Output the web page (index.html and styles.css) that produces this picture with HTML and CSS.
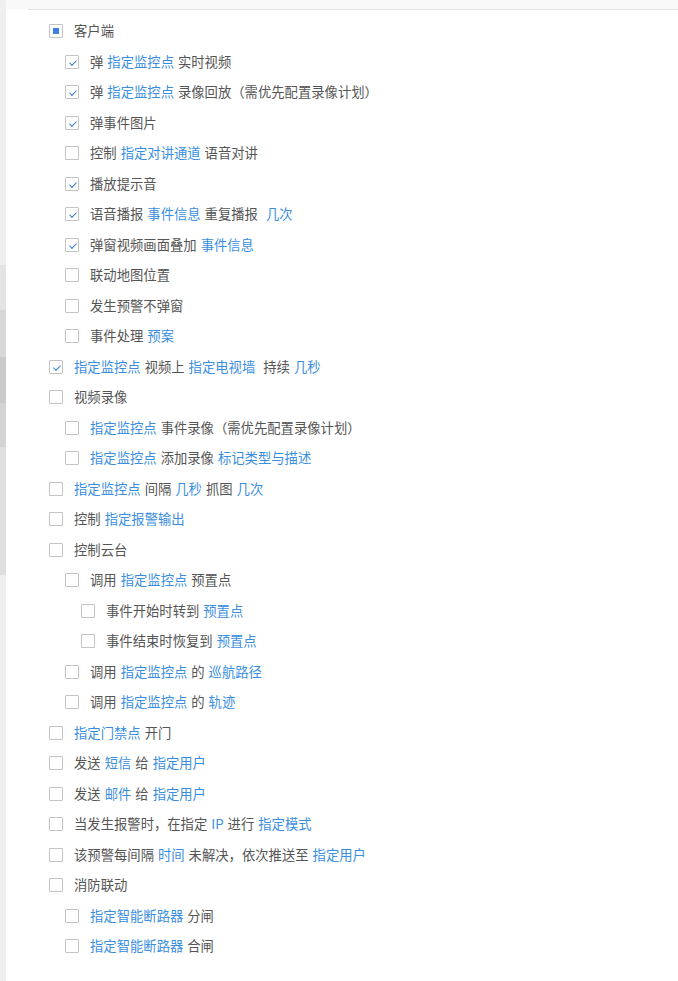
FILE: index.html
```html
<!DOCTYPE html>
<html lang="zh-CN">
<head>
<meta charset="utf-8">
<title>联动配置</title>
<link rel="stylesheet" href="styles.css">
</head>
<body>
<div class="page">
  <aside class="edge">
    <div class="seg s1"></div>
    <div class="seg s2"></div>
    <div class="seg s3"></div>
    <div class="seg s4"></div>
    <div class="seg s5"></div>
    <div class="seg s6"></div>
    <div class="seg s7"></div>
  </aside>
  <main class="main">
    <div class="topband"></div>
    <ul class="list">
      <li class="row l0"><span class="cb ind"></span><span class="txt">客户端</span></li>
      <li class="row l1"><span class="cb on"></span><span class="txt">弹 <a>指定监控点</a> 实时视频</span></li>
      <li class="row l1"><span class="cb on"></span><span class="txt">弹 <a>指定监控点</a> 录像回放（需优先配置录像计划）</span></li>
      <li class="row l1"><span class="cb on"></span><span class="txt">弹事件图片</span></li>
      <li class="row l1"><span class="cb"></span><span class="txt">控制 <a>指定对讲通道</a> 语音对讲</span></li>
      <li class="row l1"><span class="cb on"></span><span class="txt">播放提示音</span></li>
      <li class="row l1"><span class="cb on"></span><span class="txt">语音播报 <a>事件信息</a> 重复播报  <a>几次</a></span></li>
      <li class="row l1"><span class="cb on"></span><span class="txt">弹窗视频画面叠加 <a>事件信息</a></span></li>
      <li class="row l1"><span class="cb"></span><span class="txt">联动地图位置</span></li>
      <li class="row l1"><span class="cb"></span><span class="txt">发生预警不弹窗</span></li>
      <li class="row l1"><span class="cb"></span><span class="txt">事件处理 <a>预案</a></span></li>
      <li class="row l0"><span class="cb on"></span><span class="txt"><a>指定监控点</a> 视频上 <a>指定电视墙</a>  持续 <a>几秒</a></span></li>
      <li class="row l0"><span class="cb"></span><span class="txt">视频录像</span></li>
      <li class="row l1"><span class="cb"></span><span class="txt"><a>指定监控点</a> 事件录像（需优先配置录像计划）</span></li>
      <li class="row l1"><span class="cb"></span><span class="txt"><a>指定监控点</a> 添加录像 <a>标记类型与描述</a></span></li>
      <li class="row l0"><span class="cb"></span><span class="txt"><a>指定监控点</a> 间隔 <a>几秒</a> 抓图 <a>几次</a></span></li>
      <li class="row l0"><span class="cb"></span><span class="txt">控制 <a>指定报警输出</a></span></li>
      <li class="row l0"><span class="cb"></span><span class="txt">控制云台</span></li>
      <li class="row l1"><span class="cb"></span><span class="txt">调用 <a>指定监控点</a> 预置点</span></li>
      <li class="row l2"><span class="cb"></span><span class="txt">事件开始时转到 <a>预置点</a></span></li>
      <li class="row l2"><span class="cb"></span><span class="txt">事件结束时恢复到 <a>预置点</a></span></li>
      <li class="row l1"><span class="cb"></span><span class="txt">调用 <a>指定监控点</a> 的 <a>巡航路径</a></span></li>
      <li class="row l1"><span class="cb"></span><span class="txt">调用 <a>指定监控点</a> 的 <a>轨迹</a></span></li>
      <li class="row l0"><span class="cb"></span><span class="txt"><a>指定门禁点</a> 开门</span></li>
      <li class="row l0"><span class="cb"></span><span class="txt">发送 <a>短信</a> 给 <a>指定用户</a></span></li>
      <li class="row l0"><span class="cb"></span><span class="txt">发送 <a>邮件</a> 给 <a>指定用户</a></span></li>
      <li class="row l0"><span class="cb"></span><span class="txt">当发生报警时，在指定 <a>IP</a> 进行 <a>指定模式</a></span></li>
      <li class="row l0"><span class="cb"></span><span class="txt">该预警每间隔 <a>时间</a> 未解决，依次推送至 <a>指定用户</a></span></li>
      <li class="row l0"><span class="cb"></span><span class="txt">消防联动</span></li>
      <li class="row l1"><span class="cb"></span><span class="txt"><a>指定智能断路器</a> 分闸</span></li>
      <li class="row l1"><span class="cb"></span><span class="txt"><a>指定智能断路器</a> 合闸</span></li>
    </ul>
  </main>
</div>
</body>
</html>
```
FILE: styles.css
```css
html, body {
  margin: 0;
  padding: 0;
  background: #ffffff;
}

body {
  font-family: "Noto Sans CJK SC", "Noto Sans", sans-serif;
  font-size: 13.33px;
  color: #555555;
}

.page {
  display: flex;
  width: 678px;
  height: 981px;
  overflow: hidden;
}

.edge {
  width: 6px;
  flex: 0 0 6px;
  display: flex;
  flex-direction: column;
}

.seg { flex: 0 0 auto; }
.s1 { height: 265px; background: #efefef; }
.s2 { height: 45px; background: #e4e4e4; }
.s3 { height: 47px; background: #d8d8d8; }
.s4 { height: 46px; background: #cbcbcb; }
.s5 { height: 44px; background: #d4d4d4; }
.s6 { height: 128px; background: #dfdfdf; }
.s7 { flex: 1 1 auto; background: #efefef; }

.main {
  flex: 1 1 auto;
  display: flex;
  flex-direction: column;
}

.topband {
  height: 9px;
  background: #f9f9f9;
}

.list {
  list-style: none;
  margin: 0 0 0 22px;
  padding: 6px 0 0 0;
  border-top: 1px solid #e6e6e6;
}

.row {
  height: 30.5px;
  display: flex;
  align-items: center;
  white-space: pre;
  line-height: 18px;
}

.l0 { padding-left: 21px; }
.l1 { padding-left: 37px; }
.l2 { padding-left: 53px; }

.txt {
  word-spacing: 1px;
  text-spacing-trim: space-all;
}

.cb {
  box-sizing: border-box;
  width: 14px;
  height: 14px;
  flex: 0 0 14px;
  border: 1px solid #c4c4c4;
  border-radius: 1px;
  background: #ffffff;
  position: relative;
  margin-right: 11px;
}

.cb.on::after {
  content: "";
  position: absolute;
  left: 3px;
  top: 2px;
  width: 6px;
  height: 3px;
  border-left: 1.3px solid #3b7fd6;
  border-bottom: 1.3px solid #3b7fd6;
  transform: translate(0.5px, 2px) rotate(-45deg);
  transform-origin: center;
}

.cb.ind::after {
  content: "";
  position: absolute;
  left: 3px;
  top: 3px;
  width: 6px;
  height: 6px;
  background: #3c80e0;
}

.txt a {
  color: #3a8ee0;
  text-decoration: none;
}
```
